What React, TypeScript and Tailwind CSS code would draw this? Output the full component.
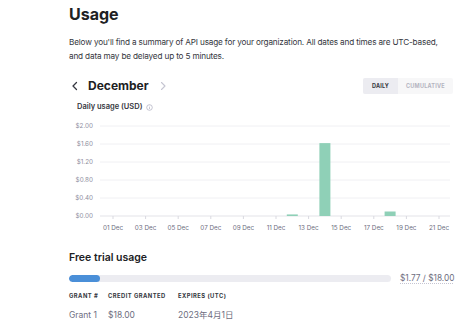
import React from 'react';

const days = [1, 3, 5, 7, 9, 11, 13, 15, 17, 19, 21];
const yTicks = ['$2.00', '$1.60', '$1.20', '$0.80', '$0.40', '$0.00'];
const usage: { day: number; value: number }[] = [
  { day: 12, value: 0.035 },
  { day: 14, value: 1.62 },
  { day: 18, value: 0.1 },
];

const dayX = (d: number) => 44 + (d - 1) * 16.3;
const ZERO_Y = 96;
const PX_PER_DOLLAR = 45;

function UsageChart() {
  return (
    <svg width={384} height={115} className="block" style={{ fontFamily: 'Inter, sans-serif' }}>
      {yTicks.map((label, i) => {
        const y = 6 + i * 18;
        return (
          <g key={label}>
            <line x1={31} x2={381} y1={y} y2={y} stroke={i === 5 ? '#e3e3e8' : '#f0f0f3'} strokeWidth={1} />
            <text x={24} y={y + 2.3} textAnchor="end" fontSize={6.3} fill="#8e8ea0">
              {label}
            </text>
          </g>
        );
      })}
      {days.map((d) => (
        <g key={d}>
          <line x1={dayX(d)} x2={dayX(d)} y1={ZERO_Y} y2={ZERO_Y + 3} stroke="#d9d9e0" strokeWidth={1} />
          <text x={dayX(d)} y={109.5} textAnchor="middle" fontSize={6.3} fill="#6e6e80">
            {String(d).padStart(2, '0')} Dec
          </text>
        </g>
      ))}
      {usage.map((u) => {
        const h = u.value * PX_PER_DOLLAR;
        return (
          <rect key={u.day} x={dayX(u.day) - 5.5} y={ZERO_Y - h} width={11} height={h} fill="#8fd0b7" />
        );
      })}
    </svg>
  );
}

export default function App() {
  return (
    <div
      className="w-[474px] h-[329px] overflow-hidden bg-white pl-[69px] pr-[21px] pt-[4px] text-[#202123]"
      style={{ fontFamily: 'Inter, "Noto Sans CJK JP", sans-serif' }}
    >
      <h1 className="text-[16px] leading-[20px] font-bold">Usage</h1>

      <p className="mt-[11px] text-[8.2px] leading-[14px] tracking-[-0.02em] text-[#353740]">
        Below you'll find a summary of API usage for your organization. All dates and times are UTC-based,
        <br />
        and data may be delayed up to 5 minutes.
      </p>

      <div className="mt-[13px] flex h-[20px] items-center justify-between">
        <div className="flex items-center">
          <svg width="8" height="10" viewBox="0 0 8 10" className="ml-[2px]">
            <path d="M5.5 1.5 L2 5 L5.5 8.5" fill="none" stroke="#353740" strokeWidth="1.3" strokeLinecap="round" strokeLinejoin="round" />
          </svg>
          <span className="ml-[9px] text-[12px] font-bold leading-none">December</span>
          <svg width="8" height="10" viewBox="0 0 8 10" className="ml-[10px]">
            <path d="M2.5 1.5 L6 5 L2.5 8.5" fill="none" stroke="#c5c5d2" strokeWidth="1.1" strokeLinecap="round" strokeLinejoin="round" />
          </svg>
        </div>
        <div className="flex h-[16px] overflow-hidden rounded-[2px] bg-[#f7f7f8] text-[5.5px] font-bold tracking-[0.04em]">
          <div className="flex w-[35px] items-center justify-center bg-[#ececf1] text-[#353740]">DAILY</div>
          <div className="flex w-[55px] items-center justify-center text-[#b4b4c0]">CUMULATIVE</div>
        </div>
      </div>

      <div className="mt-[5px] ml-[8px] flex h-[12px] items-center">
        <span className="text-[7.5px] font-semibold text-[#353740]">Daily usage (USD)</span>
        <svg width="7" height="7" viewBox="0 0 7 7" className="ml-[4px]">
          <circle cx="3.5" cy="3.5" r="2.8" fill="none" stroke="#acacbe" strokeWidth="0.7" />
          <line x1="3.5" y1="3.1" x2="3.5" y2="5" stroke="#acacbe" strokeWidth="0.7" />
          <circle cx="3.5" cy="2.1" r="0.4" fill="#acacbe" />
        </svg>
      </div>

      <div className="mt-[7px]">
        <UsageChart />
      </div>

      <h2 className="mt-[16px] text-[10.5px] leading-[14px] font-semibold">Free trial usage</h2>

      <div className="mt-[7px] flex h-[13px] items-center">
        <div className="h-[7px] w-[322px] shrink-0 overflow-hidden rounded-full bg-[#ececf1]">
          <div className="h-full w-[31px] rounded-full bg-[#4a8fd8]" />
        </div>
        <span className="ml-[9px] whitespace-nowrap text-[8.3px] text-[#6e6e80] underline decoration-dotted decoration-[#c5c5d2] underline-offset-2">
          $1.77 / $18.00
        </span>
      </div>

      <div className="mt-[6px] flex h-[10px] items-center text-[5.8px] font-bold tracking-[0.08em] text-[#353740]">
        <span className="w-[39px]">GRANT #</span>
        <span className="w-[70px]">CREDIT GRANTED</span>
        <span>EXPIRES (UTC)</span>
      </div>
      <div className="mt-[7px] flex h-[14px] items-center text-[8.5px] text-[#6e6e80]">
        <span className="w-[39px]">Grant 1</span>
        <span className="w-[70px]">$18.00</span>
        <span>2023年4月1日</span>
      </div>
    </div>
  );
}
